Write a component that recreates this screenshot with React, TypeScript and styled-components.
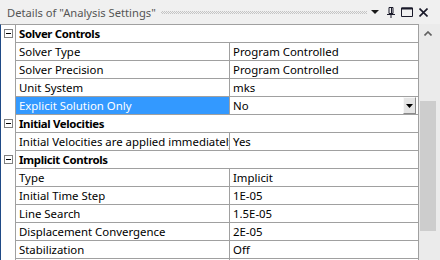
import React from "react";
import styled, { createGlobalStyle } from "styled-components";

const Global = createGlobalStyle`
  html, body { margin: 0; padding: 0; background: #f0f0f0; }
  * { box-sizing: border-box; }
`;

const Window = styled.div`
  width: 440px;
  height: 260px;
  display: flex;
  flex-direction: column;
  background: #f0f0f0;
  overflow: hidden;
  font-family: "Noto Sans", "Open Sans", sans-serif;
  font-size: 11.4px;
  color: #000;
`;

const TitleBar = styled.div`
  height: 24px;
  flex: none;
  display: flex;
  align-items: center;
  padding: 0 12px 0 7px;
`;

const Title = styled.span`
  color: #555;
  font-size: 11.2px;
  white-space: nowrap;
`;

const Grip = styled.div`
  flex: 1;
  height: 3px;
  margin: 1px 4px 0 5px;
  background-image: conic-gradient(#c4c4c4 25%, transparent 0 50%, #c4c4c4 0 75%, transparent 0);
  background-size: 2px 2px;
`;

const Tools = styled.div`
  display: flex;
  align-items: center;
`;

const ToolSlot = styled.span<{ $gap: number }>`
  display: flex;
  margin-left: ${(p) => p.$gap}px;
`;

const Body = styled.div`
  flex: 1;
  display: flex;
  min-height: 0;
`;

const Grid = styled.div`
  width: 419px;
  flex: none;
  background: #fff;
  border-left: 1px solid #1f4a86;
  border-right: 1px solid #a0a0a0;
  border-top: 1px solid #a0a0a0;
  display: flex;
  flex-direction: column;
`;

const Row = styled.div`
  height: 18px;
  flex: none;
  display: flex;
`;

const Gutter = styled.div`
  width: 15px;
  flex: none;
  border-right: 1px solid #a0a0a0;
  display: flex;
  align-items: flex-start;
  padding: 4px 0 0 3px;
`;

const ExpandBox = styled.div`
  width: 9px;
  height: 9px;
  border: 1px solid #808080;
  background: #fff;
  display: flex;
  align-items: center;
  justify-content: center;
  &::after {
    content: "";
    width: 5px;
    height: 1px;
    background: #000;
  }
`;

const Cells = styled.div`
  flex: 1;
  display: flex;
  border-bottom: 1px solid #a0a0a0;
`;

const CategoryCell = styled.div`
  flex: 1;
  padding-left: 3px;
  line-height: 17px;
  font-weight: 700;
  letter-spacing: -0.35px;
  white-space: nowrap;
`;

const NameCell = styled.div<{ $selected?: boolean }>`
  width: 214px;
  flex: none;
  border-right: 1px solid #a0a0a0;
  padding-left: 3px;
  line-height: 17px;
  white-space: nowrap;
  overflow: hidden;
  background: ${(p) => (p.$selected ? "#3399ff" : "#fff")};
  color: ${(p) => (p.$selected ? "#fff" : "#000")};
`;

const ValueCell = styled.div`
  flex: 1;
  display: flex;
  align-items: center;
  justify-content: space-between;
  padding-left: 3px;
  line-height: 17px;
  white-space: nowrap;
`;

const DropButton = styled.div`
  width: 13px;
  height: 17px;
  margin-right: 2px;
  background: #e5e5e5;
  border-right: 1px solid #8a8a8a;
  border-bottom: 1px solid #8a8a8a;
  border-top: 1px solid #f8f8f8;
  border-left: 1px solid #f8f8f8;
  display: flex;
  align-items: center;
  justify-content: center;
`;

const ScrollBar = styled.div`
  flex: 1;
  display: flex;
  flex-direction: column;
  background: #ebebeb;
`;

const ArrowUp = styled.div`
  height: 17px;
  width: 17px;
  display: flex;
  align-items: center;
  justify-content: center;
  padding-top: 1px;
`;

const Thumb = styled.div`
  width: 16px;
  height: 130px;
  margin: 60px 0 0 1px;
  background: #cdcdcd;
`;

type RowData =
  | { kind: "cat"; label: string }
  | { kind: "prop"; name: string; value: string; selected?: boolean; dropdown?: boolean };

const rows: RowData[] = [
  { kind: "cat", label: "Solver Controls" },
  { kind: "prop", name: "Solver Type", value: "Program Controlled" },
  { kind: "prop", name: "Solver Precision", value: "Program Controlled" },
  { kind: "prop", name: "Unit System", value: "mks" },
  { kind: "prop", name: "Explicit Solution Only", value: "No", selected: true, dropdown: true },
  { kind: "cat", label: "Initial Velocities" },
  { kind: "prop", name: "Initial Velocities are applied immediately", value: "Yes" },
  { kind: "cat", label: "Implicit Controls" },
  { kind: "prop", name: "Type", value: "Implicit" },
  { kind: "prop", name: "Initial Time Step", value: "1E-05" },
  { kind: "prop", name: "Line Search", value: "1.5E-05" },
  { kind: "prop", name: "Displacement Convergence", value: "2E-05" },
  { kind: "prop", name: "Stabilization", value: "Off" },
  { kind: "prop", name: "", value: "" },
];

const DownTriangle = () => (
  <svg width="8" height="4" viewBox="0 0 8 4">
    <path d="M0 0h8L4 4z" fill="#1a1a1a" />
  </svg>
);

const PinIcon = () => (
  <svg width="8" height="11" viewBox="0 0 8 11">
    <path d="M2 0.5h4v6H2z" fill="none" stroke="#1a1a2a" strokeWidth="1" />
    <path d="M4.5 0.5v6" stroke="#1a1a2a" strokeWidth="1" />
    <path d="M0 7.5h8" stroke="#1a1a2a" strokeWidth="1" />
    <path d="M4 8v3" stroke="#1a1a2a" strokeWidth="1" />
  </svg>
);

const MaxIcon = () => (
  <svg width="12" height="10" viewBox="0 0 12 10">
    <path d="M0.5 1h11v8.5H0.5z" fill="none" stroke="#1a1a2a" strokeWidth="1" />
    <path d="M0.5 1.5h11" stroke="#1a1a2a" strokeWidth="2" />
  </svg>
);

const CloseIcon = () => (
  <svg width="9" height="9" viewBox="0 0 9 9">
    <path d="M0.5 0.5l8 8M8.5 0.5l-8 8" stroke="#1a1a2a" strokeWidth="1.6" />
  </svg>
);

const Chevron = () => (
  <svg width="8" height="5" viewBox="0 0 8 5">
    <path d="M0.5 4.5L4 1l3.5 3.5" fill="none" stroke="#606060" strokeWidth="1.6" />
  </svg>
);

export default function App() {
  return (
    <>
      <Global />
      <Window>
        <TitleBar>
          <Title>Details of "Analysis Settings"</Title>
          <Grip />
          <Tools>
            <ToolSlot $gap={0}>
              <DownTriangle />
            </ToolSlot>
            <ToolSlot $gap={8}>
              <PinIcon />
            </ToolSlot>
            <ToolSlot $gap={6}>
              <MaxIcon />
            </ToolSlot>
            <ToolSlot $gap={6}>
              <CloseIcon />
            </ToolSlot>
          </Tools>
        </TitleBar>
        <Body>
          <Grid>
            {rows.map((r, i) =>
              r.kind === "cat" ? (
                <Row key={i}>
                  <Gutter>
                    <ExpandBox />
                  </Gutter>
                  <Cells>
                    <CategoryCell>{r.label}</CategoryCell>
                  </Cells>
                </Row>
              ) : (
                <Row key={i}>
                  <Gutter />
                  <Cells>
                    <NameCell $selected={r.selected}>{r.name}</NameCell>
                    <ValueCell>
                      <span>{r.value}</span>
                      {r.dropdown && (
                        <DropButton>
                          <svg width="7" height="4" viewBox="0 0 7 4">
                            <path d="M0 0h7L3.5 4z" fill="#000" />
                          </svg>
                        </DropButton>
                      )}
                    </ValueCell>
                  </Cells>
                </Row>
              )
            )}
          </Grid>
          <ScrollBar>
            <ArrowUp>
              <Chevron />
            </ArrowUp>
            <Thumb />
          </ScrollBar>
        </Body>
      </Window>
    </>
  );
}
